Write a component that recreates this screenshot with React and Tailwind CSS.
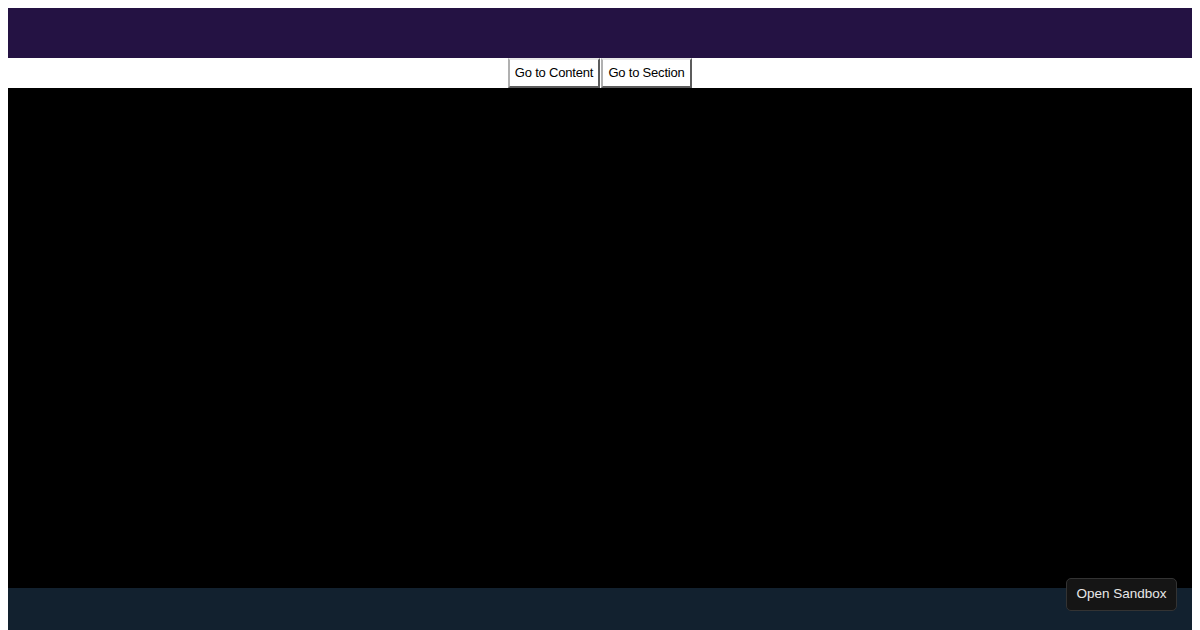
export default function App() {
  return (
    <div className="relative w-[1200px] h-[630px] overflow-hidden bg-white p-2" style={{ fontFamily: '"Liberation Sans", Arial, sans-serif' }}>
      <div className="flex flex-col w-full">
        <div className="h-[50px] bg-[#241243]" />
        <div className="h-[30px] flex justify-center items-stretch bg-white">
          <button className="w-[92px] text-[13px] tracking-[-0.2px] text-black bg-white border-2 border-solid border-t-[#e8e8e8] border-l-[#b0b0b0] border-r-[#5c5c5c] border-b-[#5c5c5c]">Go to Content</button>
          <button className="ml-px w-[91px] text-[13px] tracking-[-0.2px] text-black bg-white border-2 border-solid border-t-[#e8e8e8] border-l-[#b0b0b0] border-r-[#5c5c5c] border-b-[#5c5c5c]">Go to Section</button>
        </div>
        <div className="h-[500px] bg-black" />
        <div className="h-[60px] bg-[#12212f]" />
      </div>
      <button className="absolute right-[23px] bottom-[19px] w-[111px] h-[33px] rounded-[5px] bg-[#151515] border border-[#333333] text-[13.5px] text-[#e8e8e8] flex items-center justify-center">Open Sandbox</button>
    </div>
  );
}
